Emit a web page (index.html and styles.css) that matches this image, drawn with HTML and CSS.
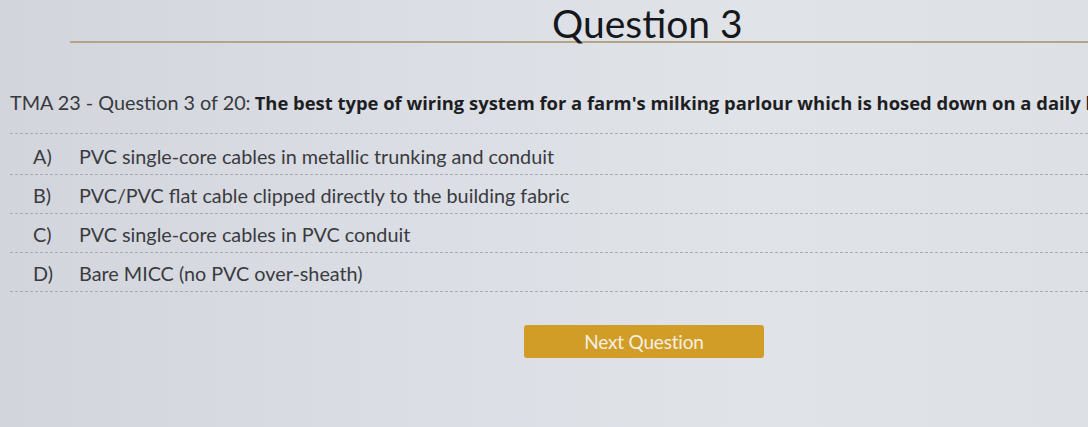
FILE: index.html
```html
<!DOCTYPE html>
<html lang="en">
<head>
<meta charset="utf-8">
<title>Question 3</title>
<link rel="stylesheet" href="styles.css">
</head>
<body>
<div class="page">
  <header class="head">
    <h1 class="title">Question 3</h1>
  </header>
  <p class="question"><span class="meta">TMA 23 - Question 3 of 20:</span> <strong class="stem">The best type of wiring system for a farm's milking parlour which is hosed down on a daily basis is</strong></p>
  <ul class="options">
    <li class="option first"><span class="letter">A)</span><span class="text">PVC single-core cables in metallic trunking and conduit</span></li>
    <li class="option"><span class="letter">B)</span><span class="text">PVC/PVC flat cable clipped directly to the building fabric</span></li>
    <li class="option"><span class="letter">C)</span><span class="text">PVC single-core cables in PVC conduit</span></li>
    <li class="option"><span class="letter">D)</span><span class="text">Bare MICC (no PVC over-sheath)</span></li>
  </ul>
  <div class="actions">
    <button class="next" type="button">Next Question</button>
  </div>
</div>
</body>
</html>
```
FILE: styles.css
```css
html, body {
  margin: 0;
  padding: 0;
}
body {
  width: 1088px;
  height: 427px;
  overflow: hidden;
  background: linear-gradient(90deg, #d2d5db 0%, #dadde3 35%, #e0e3e8 70%, #dde0e5 100%);
  font-family: Lato, "Open Sans", sans-serif;
  color: #3a3b3f;
}
.page {
  display: flex;
  flex-direction: column;
  width: 1088px;
}
.head {
  margin-left: 70px;
  border-bottom: 2px solid #b3a488;
  height: 41px;
  display: flex;
  align-items: flex-end;
}
.title {
  margin: 0 0 -2px 482px;
  font-weight: 400;
  font-size: 39px;
  line-height: 40px;
  color: #16171b;
}
.question {
  margin: 45px 0 0 10px;
  white-space: nowrap;
  line-height: 28px;
  padding-bottom: 15px;
  border-bottom: 1px dashed #a9abb0;
}
.meta {
  font-size: 19.8px;
  color: #38393d;
}
.stem {
  font-family: "Open Sans", sans-serif;
  font-weight: 700;
  font-size: 18.4px;
  color: #1d1e22;
}
.options {
  list-style: none;
  margin: 0 0 0 10px;
  padding: 0;
}
.option {
  display: flex;
  align-items: center;
  height: 37px;
  padding-top: 1px;
  border-bottom: 1px dashed #a9abb0;
  font-size: 19.8px;
}
.option.first {
  padding-top: 3px;
}
.letter {
  width: 46px;
  padding-left: 23px;
  color: #3a3b3f;
}
.text {
  color: #3a3b3f;
}
.actions {
  display: flex;
  justify-content: flex-start;
  margin-top: 33px;
}
.next {
  margin-left: 524px;
  width: 240px;
  height: 33px;
  border: none;
  border-radius: 3px;
  background: #d29d27;
  color: #f4efe2;
  font-family: Lato, sans-serif;
  font-size: 19px;
  letter-spacing: -0.2px;
  padding: 0;
  cursor: pointer;
}
```
